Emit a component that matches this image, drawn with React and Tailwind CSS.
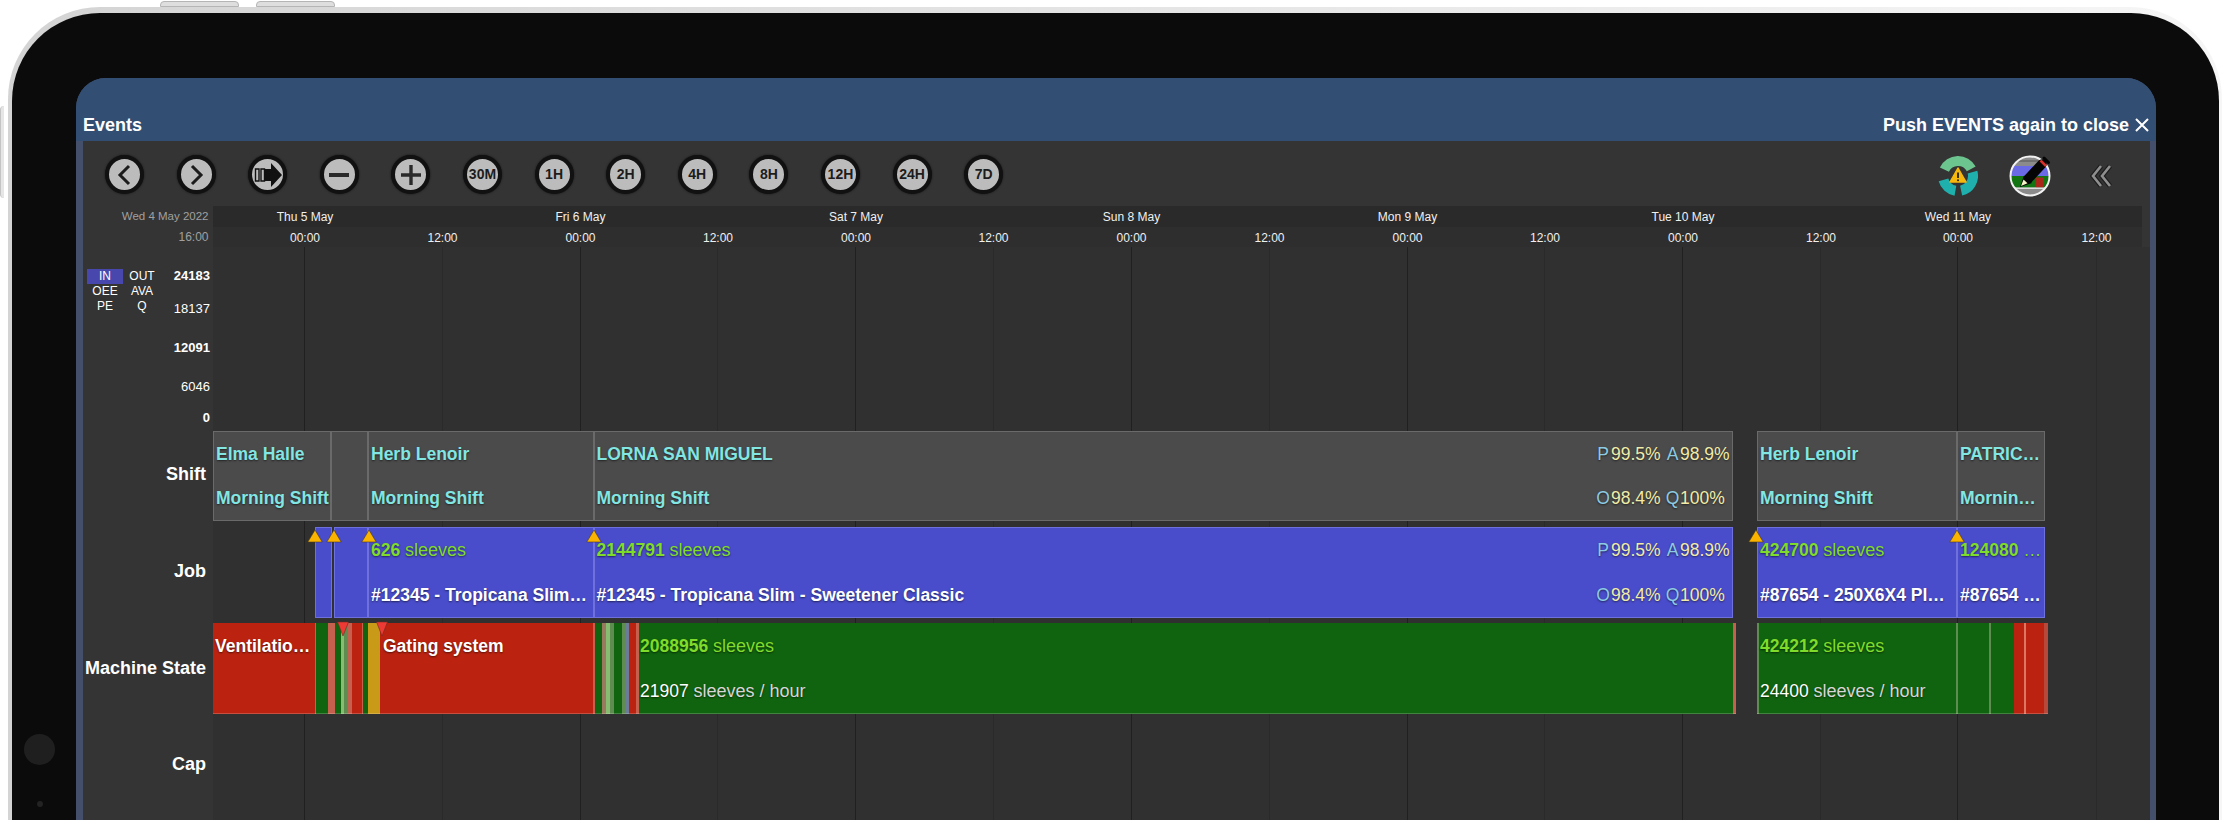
import React from 'react';

const ORIGIN = 213;
const FONT = "font-['Liberation_Sans',Arial,sans-serif]";
const SHADOW = '[text-shadow:0_1px_2px_rgba(0,0,0,0.55)]';

// place on the time axis, in page px
const span = (x0, x1) => ({ left: x0 - ORIGIN, width: x1 - x0 });

const days = [
  { x: 305, label: 'Thu 5 May' },
  { x: 580.5, label: 'Fri 6 May' },
  { x: 856, label: 'Sat 7 May' },
  { x: 1131.5, label: 'Sun 8 May' },
  { x: 1407.5, label: 'Mon 9 May' },
  { x: 1683, label: 'Tue 10 May' },
  { x: 1958, label: 'Wed 11 May' },
];
const noons = [442.5, 718, 993.5, 1269.5, 1545, 1821, 2096.5];

const shifts = [
  { x0: 213, x1: 331, a: 'Elma Halle', b: 'Morning Shift' },
  { x0: 331, x1: 368 },
  { x0: 368, x1: 593.5, a: 'Herb Lenoir', b: 'Morning Shift' },
  { x0: 593.5, x1: 1733, a: 'LORNA SAN MIGUEL', b: 'Morning Shift', stats: true },
  { x0: 1757, x1: 1957, a: 'Herb Lenoir', b: 'Morning Shift' },
  { x0: 1957, x1: 2045, a: 'PATRIC…', b: 'Mornin…' },
];

const jobs = [
  { x0: 314.5, x1: 332 },
  { x0: 334, x1: 368 },
  { x0: 368, x1: 593.5, n: '626', unit: 'sleeves', b: '#12345 - Tropicana Slim…' },
  { x0: 593.5, x1: 1733, n: '2144791', unit: 'sleeves', b: '#12345 - Tropicana Slim - Sweetener Classic', stats: true },
  { x0: 1757, x1: 1957, n: '424700', unit: 'sleeves', b: '#87654 - 250X6X4 Pl…' },
  { x0: 1957, x1: 2045, n: '124080', unit: '…', b: '#87654 …' },
];

const RED = '#bb2310';
const GREEN = '#10640f';
const SALMON = '#c5604f';
const LIME = '#86bd70';
const MOSS = '#5f8c50';
const stripes = [
  [213, 315, RED], [315, 316, SALMON], [316, 327.5, GREEN], [327.5, 335, SALMON], [335, 340.5, GREEN],
  [340.5, 344, LIME], [344, 348, MOSS], [348, 352, SALMON], [352, 362, RED], [362, 363, SALMON],
  [363, 368, GREEN], [368, 380, '#c99a18'], [380, 593, RED], [593, 595, SALMON], [595, 601.5, GREEN],
  [601.5, 606, '#9a7a5e'], [606, 610, LIME], [610, 613.5, MOSS], [613.5, 622, GREEN], [622, 625.5, MOSS],
  [625.5, 629, '#6b7c98'], [629, 636, RED], [636, 639, SALMON], [639, 1733, GREEN], [1733, 1736, SALMON],
  [1757, 1759, MOSS], [1759, 1956, GREEN], [1956, 1958, MOSS], [1958, 1989, GREEN], [1989, 1991, MOSS],
  [1991, 2014, GREEN], [2014, 2024, RED], [2024, 2026, '#dd7762'], [2026, 2044, RED], [2044, 2048, '#b8483a'],
];

const amberAt = [315, 334, 368.5, 594, 1756, 1957];
const redAt = [342.5, 381.5];

const Stats = () => (
  <div className="absolute right-[2px] inset-y-0 flex flex-col justify-around text-[17.5px] font-normal">
    {[['P', '99.5%', 'A', '98.9%'], ['O', '98.4%', 'Q', '100%']].map((row, i) => (
      <div key={i} className="grid grid-cols-[16px_54px_15px_50px] items-center leading-[22px]">
        {row.map((v, j) => (
          <span key={j} className={j % 2 === 0 ? 'text-[#8ccbe2] text-center' : 'text-[#f1eca8]'}>{v}</span>
        ))}
      </div>
    ))}
  </div>
);

const RoundButton = ({ children }) => (
  <button className="w-[39px] h-[39px] rounded-full bg-[#bcbcbc] border-[4px] border-[#111111] flex items-center justify-center text-[14px] font-bold text-[#1c1c1c] shadow-[0_0_2px_#111]">
    {children}
  </button>
);

const polar = (a, r) => {
  const t = (a * Math.PI) / 180;
  return `${(20 + r * Math.cos(t)).toFixed(2)} ${(20 + r * Math.sin(t)).toFixed(2)}`;
};
const arc = (a0, a1, r = 15) => `M${polar(a0, r)} A${r} ${r} 0 0 1 ${polar(a1, r)}`;

const AlarmIcon = () => (
  <svg width="40" height="40" viewBox="0 0 40 40" fill="none">
    <path d={arc(-155, -28)} stroke="#6cc48f" strokeWidth="10" />
    <path d={arc(100, 165)} stroke="#1fb0ad" strokeWidth="10" />
    <path d={arc(-15, 78)} stroke="#1fb0ad" strokeWidth="10" />
    <path d="M20 12 L28 26 H12 Z" fill="#f6b80c" stroke="#f6b80c" strokeWidth="1.5" strokeLinejoin="round" />
    <path d="M20 16.5 V22" stroke="#222" strokeWidth="1.8" />
    <circle cx="20" cy="24.3" r="1" fill="#222" />
  </svg>
);

const EditIcon = () => (
  <svg width="42" height="42" viewBox="0 0 42 42" fill="none">
    <defs>
      <clipPath id="editClip"><circle cx="21" cy="21" r="19.5" /></clipPath>
    </defs>
    <g clipPath="url(#editClip)">
      <rect width="42" height="42" fill="#8b8b8b" />
      <rect y="5.5" width="42" height="1" fill="#555" />
      <rect y="11" width="42" height="10" fill="#6a6ae6" />
      <rect y="21" width="42" height="11.5" fill="#127412" />
      <rect x="27" y="22.5" width="8" height="10" fill="#a8261a" />
      <rect y="32.5" width="42" height="1.5" fill="#dddddd" />
    </g>
    <circle cx="21" cy="21" r="19.5" stroke="#f2f2f2" strokeWidth="2" />
    <path d="M19 24 L33 9" stroke="#050505" strokeWidth="9.5" strokeLinecap="round" />
    <path d="M31.5 5.5 L37 11" stroke="#d8302a" strokeWidth="2.5" />
    <path d="M35 3 L39.5 7.5" stroke="#050505" strokeWidth="3" strokeLinecap="round" />
    <path d="M11 32 L15 20.5 L23 28 Z" fill="#050505" />
    <path d="M12 31 L14.5 24.5 L18.5 28.2 Z" fill="#f6f3c4" />
  </svg>
);

const CollapseIcon = () => (
  <svg width="24" height="26" viewBox="0 0 24 26" fill="none">
    <path d="M11 3 L3 13 L11 23 M20 3 L12 13 L20 23" stroke="#1d1d1d" strokeWidth="5" />
    <path d="M11 3 L3 13 L11 23 M20 3 L12 13 L20 23" stroke="#8e8e8e" strokeWidth="2.6" />
  </svg>
);

const Amber = ({ x }) => (
  <svg className="absolute top-[2px] z-10" style={{ left: x - ORIGIN - 8 }} width="16" height="14" viewBox="0 0 16 14">
    <path d="M8 1 L15.2 13 H0.8 Z" fill="#fab400" stroke="#4a3a20" strokeWidth="0.6" />
  </svg>
);

const RedPin = ({ x }) => (
  <svg className="absolute top-[-2px] z-10" style={{ left: x - ORIGIN - 6 }} width="12" height="16" viewBox="0 0 12 16">
    <path d="M0.5 1 H11.5 L6 15 Z" fill="#ee3a34" stroke="#6e2a22" strokeWidth="0.6" />
  </svg>
);

const RowLabel = ({ children, className = '' }) => (
  <div className={`w-[130px] shrink-0 pr-[7px] text-right text-white font-bold text-[18px] leading-none ${className}`}>
    {children}
  </div>
);

const Line = ({ children, className = '' }) => (
  <div className={`whitespace-nowrap leading-[22px] ${className}`}>{children}</div>
);

export default function App() {
  return (
    <div className={`relative w-full h-[820px] overflow-hidden bg-white pt-[7px] pl-[8px] pr-[6px] ${FONT}`}>
      {/* hardware buttons */}
      <div className="absolute top-[1px] left-[160px] w-[79px] h-[6px] rounded-t-sm bg-[#dedede] border border-[#b5b5b5]" />
      <div className="absolute top-[1px] left-[256px] w-[79px] h-[6px] rounded-t-sm bg-[#dedede] border border-[#b5b5b5]" />
      <div className="absolute top-[106px] left-0 w-[4px] h-[92px] rounded-l-sm bg-[#e6e6e6] border-l border-[#c4c4c4]" />

      {/* device shell */}
      <div className="h-[900px] rounded-t-[92px] bg-gradient-to-r from-[#d4d4d4] via-[#e4e4e4] to-[#f6f6f6] pt-[6px] pl-[4px] pr-[3px]">
        <div className="relative h-full rounded-t-[88px] bg-[#0b0b0b] pt-[65px] pl-[64px] pr-[63px]">
          <div className="absolute left-[12px] top-[721px] w-[31px] h-[31px] rounded-full bg-[#1f1f1f]" />
          <div className="absolute left-[25px] top-[788px] w-[6px] h-[6px] rounded-full bg-[#232323]" />

          <div className="rounded-t-[30px] bg-[#434f6b] h-full overflow-hidden">
            {/* title bar */}
            <div className="h-[63px] bg-[#334e73] flex items-end justify-between pl-[7px] pr-[7px] pb-[5px] text-white font-bold text-[18px] leading-[22px]">
              <span>Events</span>
              <span className="flex items-center gap-[6px]">
                Push EVENTS again to close
                <svg width="14" height="14" viewBox="0 0 14 14" fill="none">
                  <path d="M1 1 L13 13 M13 1 L1 13" stroke="white" strokeWidth="2" />
                </svg>
              </span>
            </div>

            <div className="ml-[7px] mr-[6px] h-full bg-[#343434]">
              {/* toolbar */}
              <div className="h-[65px] pt-[14px] pl-[22px] flex items-start gap-[32.6px] relative">
                <RoundButton>
                  <svg width="20" height="24" viewBox="0 0 20 24" fill="none">
                    <path d="M14 3 L5 12 L14 21" stroke="#1c1c1c" strokeWidth="3" />
                  </svg>
                </RoundButton>
                <RoundButton>
                  <svg width="20" height="24" viewBox="0 0 20 24" fill="none">
                    <path d="M6 3 L15 12 L6 21" stroke="#1c1c1c" strokeWidth="3" />
                  </svg>
                </RoundButton>
                <RoundButton>
                  <svg width="28" height="26" viewBox="0 0 28 26">
                    <path d="M1.5 7 H5 V19 H1.5 Z M7 7 H10.5 V19 H7 Z" fill="#bcbcbc" stroke="#111" strokeWidth="1.4" />
                    <path d="M11 7 H17 V1 L28 13 L17 25 V19 H11 Z" fill="#111" />
                  </svg>
                </RoundButton>
                <RoundButton>
                  <svg width="26" height="26" viewBox="0 0 26 26" fill="none">
                    <path d="M3 13 H23" stroke="#2a2a2a" strokeWidth="4" />
                  </svg>
                </RoundButton>
                <RoundButton>
                  <svg width="26" height="26" viewBox="0 0 26 26" fill="none">
                    <path d="M3 13 H23 M13 3 V23" stroke="#2a2a2a" strokeWidth="3.4" />
                  </svg>
                </RoundButton>
                {['30M', '1H', '2H', '4H', '8H', '12H', '24H', '7D'].map((t) => (
                  <RoundButton key={t}>{t}</RoundButton>
                ))}
                <div className="absolute top-[14px] right-[36px] flex items-center">
                  <AlarmIcon />
                  <div className="w-[31px]" />
                  <EditIcon />
                  <div className="w-[39px]" />
                  <CollapseIcon />
                </div>
              </div>

              {/* time axis */}
              <div className="flex text-[12px] leading-none">
                <div className="w-[130px] shrink-0 pr-[4.5px] text-right text-[#a0a0a0]">
                  <div className="h-[21px] flex items-center justify-end text-[11.5px]">Wed 4 May 2022</div>
                  <div className="h-[20px] flex items-center justify-end">16:00</div>
                </div>
                <div className="flex-1 mr-[8px] relative text-[#f0f0f0]">
                  <div className="h-[21px] bg-[#2a2a2a]" />
                  <div className="h-[20px] bg-[#2e2e2e]" />
                  {days.map((d) => (
                    <React.Fragment key={d.label}>
                      <span className="absolute top-[5px] -translate-x-1/2 whitespace-nowrap" style={{ left: d.x - ORIGIN }}>{d.label}</span>
                      <span className="absolute top-[26px] -translate-x-1/2" style={{ left: d.x - ORIGIN }}>00:00</span>
                    </React.Fragment>
                  ))}
                  {noons.map((x) => (
                    <span key={x} className="absolute top-[26px] -translate-x-1/2" style={{ left: x - ORIGIN }}>12:00</span>
                  ))}
                </div>
              </div>

              {/* chart area */}
              <div className="relative">
                <div className="absolute left-[130px] right-0 top-0 h-[600px] bg-[#303030]">
                  {days.map((d) => (
                    <div key={d.x} className="absolute top-0 bottom-0 w-px bg-[#202020]" style={{ left: d.x - ORIGIN - 1 }} />
                  ))}
                  {noons.map((x) => (
                    <div key={x} className="absolute top-0 bottom-0 w-px bg-[#2a2a2a]" style={{ left: x - ORIGIN - 1 }} />
                  ))}
                </div>

                {/* axis + selectors */}
                <div className="relative h-[184px] w-[130px] pl-[4px] pr-[3px] pt-[22px] flex justify-between text-white">
                  <div className="grid grid-cols-[36px_36px] gap-x-px auto-rows-[15px] text-[12px] text-center h-[45px] leading-[15px]">
                    <span className="bg-[#4747ad]">IN</span>
                    <span>OUT</span>
                    <span>OEE</span>
                    <span>AVA</span>
                    <span>PE</span>
                    <span>Q</span>
                  </div>
                  <div className="text-right text-[13px] leading-[14px] flex flex-col">
                    <span className="font-bold">24183</span>
                    <span className="mt-[19px]">18137</span>
                    <span className="mt-[25px] font-bold">12091</span>
                    <span className="mt-[25px]">6046</span>
                    <span className="mt-[17px] font-bold">0</span>
                  </div>
                </div>

                {/* shift */}
                <div className="relative flex h-[90px] items-center">
                  <RowLabel className="-mt-[4px]">Shift</RowLabel>
                  <div className="relative flex-1 h-full">
                    {shifts.map((s) => (
                      <div
                        key={s.x0}
                        className={`absolute inset-y-0 bg-[#4b4b4b] border border-[#6a6a6a] pl-[2px] flex flex-col justify-around text-[17.5px] font-bold text-[#82e6e2] ${SHADOW}`}
                        style={span(s.x0, s.x1)}
                      >
                        {s.a && <Line>{s.a}</Line>}
                        {s.b && <Line>{s.b}</Line>}
                        {s.stats && <Stats />}
                      </div>
                    ))}
                  </div>
                </div>

                {/* job */}
                <div className="relative flex h-[91px] mt-[6px] items-center">
                  <RowLabel className="-mt-[3px]">Job</RowLabel>
                  <div className="relative flex-1 h-full">
                    {jobs.map((j) => (
                      <div
                        key={j.x0}
                        className={`absolute inset-y-0 bg-[#4a4dcb] border border-[#6e70dc] pl-[2px] flex flex-col justify-around text-[17.5px] ${SHADOW}`}
                        style={span(j.x0, j.x1)}
                      >
                        {j.n && (
                          <Line className="text-[#80dc2a]">
                            <span className="font-bold">{j.n}</span> <span className="text-[18px]">{j.unit}</span>
                          </Line>
                        )}
                        {j.b && <Line className="font-bold text-white">{j.b}</Line>}
                        {j.stats && <Stats />}
                      </div>
                    ))}
                    {amberAt.map((x) => <Amber key={x} x={x} />)}
                  </div>
                </div>

                {/* machine state */}
                <div className="relative flex h-[91px] mt-[5px] items-center">
                  <RowLabel className="-mt-[1px]">Machine State</RowLabel>
                  <div className="relative flex-1 h-full">
                    {stripes.map(([x0, x1, c]) => (
                      <div key={x0} className="absolute inset-y-0" style={{ ...span(x0, x1), background: c }} />
                    ))}
                    <div className="absolute bottom-0 h-px bg-white/20" style={span(213, 1736)} />
                    <div className="absolute bottom-0 h-px bg-white/20" style={span(1757, 2048)} />
                    <div className={`absolute inset-y-0 flex flex-col justify-around pl-[2px] text-[17.5px] font-bold text-white ${SHADOW}`} style={span(213, 315)}>
                      <Line>Ventilatio…</Line>
                      <Line>&nbsp;</Line>
                    </div>
                    <div className={`absolute inset-y-0 flex flex-col justify-around pl-[3px] text-[17.5px] font-bold text-white ${SHADOW}`} style={span(380, 593)}>
                      <Line>Gating system</Line>
                      <Line>&nbsp;</Line>
                    </div>
                    <div className={`absolute inset-y-0 flex flex-col justify-around pl-[1px] text-[17.5px] ${SHADOW}`} style={span(639, 1733)}>
                      <Line className="text-[#80dc2a]"><span className="font-bold">2088956</span> <span className="text-[18px]">sleeves</span></Line>
                      <Line className="text-[#d6d6d6]"><span className="text-white">21907</span> <span className="text-[18px]">sleeves / hour</span></Line>
                    </div>
                    <div className={`absolute inset-y-0 flex flex-col justify-around pl-[3px] text-[17.5px] ${SHADOW}`} style={span(1757, 1956)}>
                      <Line className="text-[#80dc2a]"><span className="font-bold">424212</span> <span className="text-[18px]">sleeves</span></Line>
                      <Line className="text-[#d6d6d6]"><span className="text-white">24400</span> <span className="text-[18px]">sleeves / hour</span></Line>
                    </div>
                    {redAt.map((x) => <RedPin key={x} x={x} />)}
                  </div>
                </div>

                {/* cap */}
                <div className="relative flex pt-[41px]">
                  <RowLabel>Cap</RowLabel>
                </div>
              </div>
            </div>
          </div>
        </div>
      </div>
    </div>
  );
}
